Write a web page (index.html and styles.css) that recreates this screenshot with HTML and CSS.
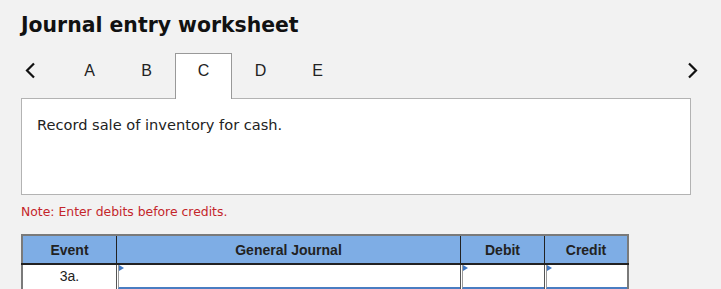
FILE: index.html
```html
<!DOCTYPE html>
<html>
<head>
<meta charset="utf-8">
<link rel="stylesheet" href="styles.css">
</head>
<body>
<div class="page">
  <h1 class="title">Journal entry worksheet</h1>
  <div class="tabbar">
    <span class="chev chev-left"><svg width="12" height="17" viewBox="0 0 12 17"><path d="M10 1.5 L3 8.5 L10 15.5" fill="none" stroke="#111" stroke-width="2.2"/></svg></span>
    <div class="tabs">
      <div class="tab">A</div>
      <div class="tab">B</div>
      <div class="tab active">C</div>
      <div class="tab">D</div>
      <div class="tab">E</div>
    </div>
    <span class="chev chev-right"><svg width="12" height="17" viewBox="0 0 12 17"><path d="M2 1.5 L9 8.5 L2 15.5" fill="none" stroke="#111" stroke-width="2.2"/></svg></span>
  </div>
  <div class="panel">Record sale of inventory for cash.</div>
  <p class="note">Note: Enter debits before credits.</p>
  <table class="journal">
    <thead>
      <tr>
        <th class="c-event">Event</th>
        <th class="c-gj">General Journal</th>
        <th class="c-num">Debit</th>
        <th class="c-num">Credit</th>
      </tr>
    </thead>
    <tbody>
      <tr>
        <td class="event">3a.</td>
        <td><div class="inp"></div></td>
        <td><div class="inp"></div></td>
        <td><div class="inp"></div></td>
      </tr>
      <tr>
        <td class="event"></td>
        <td><div class="inp"></div></td>
        <td><div class="inp"></div></td>
        <td><div class="inp"></div></td>
      </tr>
    </tbody>
  </table>
</div>
</body>
</html>
```
FILE: styles.css
```css
html, body {
  margin: 0;
  padding: 0;
  background: #f2f2f2;
}
.page {
  padding: 0 30px 0 21px;
}
.title {
  margin: 0;
  padding-top: 12px;
  font-family: "DejaVu Sans", Verdana, sans-serif;
  font-weight: bold;
  font-size: 20.4px;
  line-height: 26px;
  color: #111;
}
.tabbar {
  display: flex;
  align-items: flex-start;
  margin-top: 15px;
  height: 45px;
  position: relative;
  z-index: 1;
}
.chev {
  display: block;
  margin-top: 9px;
}
.chev-left {
  margin-left: 3px;
}
.chev-right {
  margin-left: auto;
  margin-right: -8px;
}
.tabs {
  display: flex;
  margin-left: 25px;
}
.tab {
  width: 57px;
  box-sizing: border-box;
  height: 46px;
  text-align: center;
  font-family: "Liberation Sans", Arial, sans-serif;
  font-size: 16px;
  line-height: 18px;
  padding-top: 8px;
  color: #222;
  border: 1px solid transparent;
  border-bottom: none;
}
.tab.active {
  background: #fff;
  border-color: #999;
}
.panel {
  background: #fff;
  border: 1px solid #b3b3b3;
  box-sizing: border-box;
  height: 97px;
  padding: 17px 15px;
  font-family: "DejaVu Sans", Verdana, sans-serif;
  font-size: 14.6px;
  line-height: 18px;
  color: #222;
}
.note {
  margin: 9px 0 0;
  font-family: "DejaVu Sans", Verdana, sans-serif;
  font-size: 12.4px;
  line-height: 15px;
  color: #c4262b;
}
.journal {
  margin-top: 15px;
  border-collapse: collapse;
  border-top: 2px solid #7a7a7a;
  border-left: 2px solid #7a7a7a;
  border-right: 2px solid #7a7a7a;
  font-family: "Liberation Sans", Arial, sans-serif;
}
.journal th {
  background: #7eade5;
  color: #222;
  font-size: 14px;
  font-weight: bold;
  height: 27px;
  padding: 0;
  border-left: 1px solid #222;
  border-bottom: 2px solid #222;
}
.journal th:first-child {
  border-left: none;
}
.c-event { width: 93px; }
.c-gj { width: 343px; }
.c-num { width: 83px; }
.c-num:last-child { width: 82px; }
.journal td {
  background: #fff;
  padding: 0;
  height: 25px;
  vertical-align: top;
  border-left: 1px solid #555;
}
.journal td:first-child {
  border-left: none;
}
.journal td.event {
  text-align: center;
  font-size: 14px;
  line-height: 16px;
  padding-top: 3px;
  color: #222;
}
.inp {
  position: relative;
  height: 24px;
  box-sizing: border-box;
  margin-left: 1px;
  border-left: 1px solid #9a9a9a;
  border-bottom: 2px solid #4a7dc2;
  background: #fff;
}
.inp::before {
  content: "";
  position: absolute;
  left: 0;
  top: 0;
  border-top: 3.5px solid transparent;
  border-bottom: 3.5px solid transparent;
  border-left: 5px solid #3f78c4;
}
```
